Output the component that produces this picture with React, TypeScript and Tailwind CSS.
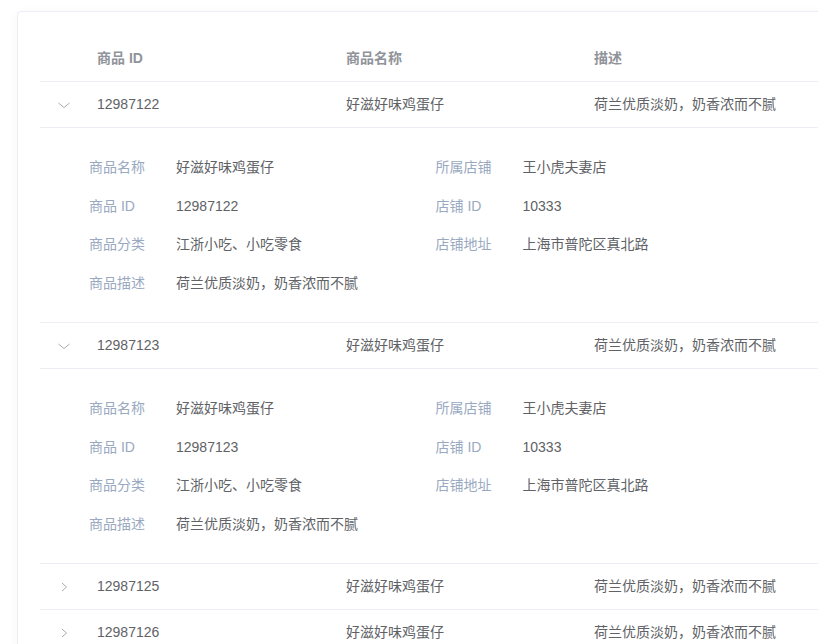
import React from 'react';

interface Product {
  id: string;
  name: string;
  category: string;
  desc: string;
  shop: string;
  shopId: string;
  address: string;
  expanded: boolean;
}

const products: Product[] = [
  {
    id: '12987122',
    name: '好滋好味鸡蛋仔',
    category: '江浙小吃、小吃零食',
    desc: '荷兰优质淡奶，奶香浓而不腻',
    shop: '王小虎夫妻店',
    shopId: '10333',
    address: '上海市普陀区真北路',
    expanded: true,
  },
  {
    id: '12987123',
    name: '好滋好味鸡蛋仔',
    category: '江浙小吃、小吃零食',
    desc: '荷兰优质淡奶，奶香浓而不腻',
    shop: '王小虎夫妻店',
    shopId: '10333',
    address: '上海市普陀区真北路',
    expanded: true,
  },
  {
    id: '12987125',
    name: '好滋好味鸡蛋仔',
    category: '江浙小吃、小吃零食',
    desc: '荷兰优质淡奶，奶香浓而不腻',
    shop: '王小虎夫妻店',
    shopId: '10333',
    address: '上海市普陀区真北路',
    expanded: false,
  },
  {
    id: '12987126',
    name: '好滋好味鸡蛋仔',
    category: '江浙小吃、小吃零食',
    desc: '荷兰优质淡奶，奶香浓而不腻',
    shop: '王小虎夫妻店',
    shopId: '10333',
    address: '上海市普陀区真北路',
    expanded: false,
  },
];

// expanded: wide flat "v"; collapsed: small ">"
const Chevron = ({ open }: { open: boolean }) => (
  <svg width="14" height="12" viewBox="0 0 14 12" fill="none" stroke="#a8abb2" strokeWidth="1">
    {open ? <path d="M1.5 4 L7 8.5 L12.5 4" /> : <path d="M5 2 L9.5 6 L5 10" />}
  </svg>
);

const Field = ({ label, value }: { label: string; value: string }) => (
  <div className="flex items-center h-[38.75px] w-1/2">
    <span className="w-[87px] shrink-0 text-[#99a9bf]">{label}</span>
    <span className="text-[#606266]">{value}</span>
  </div>
);

export default function App() {
  return (
    <div
      className="w-[818px] h-[644px] overflow-hidden bg-white pl-[17px] pt-[11px] text-[14px]"
      style={{ fontFamily: '"Liberation Sans", "Noto Sans CJK SC", sans-serif' }}
    >
      <div className="w-[900px] min-h-[700px] rounded border border-[#ebeef5] shadow-[0_2px_12px_0_rgba(0,0,0,0.04)] pl-[22px] pt-[24px]">
        <div className="w-[792px]">
          {/* Header */}
          <div className="flex h-[46px] items-center border-b border-[#ebeef5] font-bold text-[#909399]">
            <div className="w-[48px]" />
            <div className="w-[248px] pl-[9px]">商品 ID</div>
            <div className="w-[248px] pl-[10px]">商品名称</div>
            <div className="w-[248px] pl-[10px]">描述</div>
          </div>

          {products.map(p => (
            <div key={p.id}>
              <div className="flex h-[46px] items-center border-b border-[#ebeef5] text-[#606266]">
                <div className="w-[48px] flex justify-center">
                  <Chevron open={p.expanded} />
                </div>
                <div className="w-[248px] pl-[9px]">{p.id}</div>
                <div className="w-[248px] pl-[10px]">{p.name}</div>
                <div className="w-[248px] pl-[10px]">{p.desc}</div>
              </div>
              {p.expanded && (
                <div className="flex flex-wrap border-b border-[#ebeef5] pl-[49px] pr-[50px] pt-[20px] pb-[19px]">
                  <Field label="商品名称" value={p.name} />
                  <Field label="所属店铺" value={p.shop} />
                  <Field label="商品 ID" value={p.id} />
                  <Field label="店铺 ID" value={p.shopId} />
                  <Field label="商品分类" value={p.category} />
                  <Field label="店铺地址" value={p.address} />
                  <Field label="商品描述" value={p.desc} />
                </div>
              )}
            </div>
          ))}
        </div>
      </div>
    </div>
  );
}
